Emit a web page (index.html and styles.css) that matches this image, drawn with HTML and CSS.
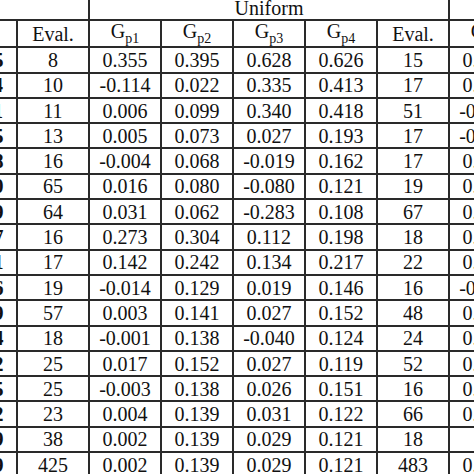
FILE: index.html
```html
<!DOCTYPE html>
<html lang="en">
<head>
    <meta charset="UTF-8">
    <title>Results table</title>
    <link rel="stylesheet" href="styles.css">
</head>
<body>
    <div class="frame">
        <table class="results">
            <colgroup>
                <col><col><col><col><col><col><col><col>
            </colgroup>
            <thead>
                <tr>
                    <th colspan="2"></th>
                    <th colspan="5">Uniform</th>
                    <th></th>
                </tr>
                <tr>
                    <th></th>
                    <th>Eval.</th>
                    <th>G<sub>p1</sub></th>
                    <th>G<sub>p2</sub></th>
                    <th>G<sub>p3</sub></th>
                    <th>G<sub>p4</sub></th>
                    <th>Eval.</th>
                    <th>G<sub>p1</sub></th>
                </tr>
            </thead>
            <tbody>
                <tr><td class="best">0.355</td><td>8</td><td>0.355</td><td>0.395</td><td>0.628</td><td>0.626</td><td>15</td><td>0.349</td></tr>
                <tr><td class="best">0.114</td><td>10</td><td>-0.114</td><td>0.022</td><td>0.335</td><td>0.413</td><td>17</td><td>0.018</td></tr>
                <tr><td class="best">0.011</td><td>11</td><td>0.006</td><td>0.099</td><td>0.340</td><td>0.418</td><td>51</td><td>-0.012</td></tr>
                <tr><td class="best">0.005</td><td>13</td><td>0.005</td><td>0.073</td><td>0.027</td><td>0.193</td><td>17</td><td>-0.007</td></tr>
                <tr><td class="best">0.008</td><td>16</td><td>-0.004</td><td>0.068</td><td>-0.019</td><td>0.162</td><td>17</td><td>0.004</td></tr>
                <tr><td class="best">0.010</td><td>65</td><td>0.016</td><td>0.080</td><td>-0.080</td><td>0.121</td><td>19</td><td>0.012</td></tr>
                <tr><td class="best">0.029</td><td>64</td><td>0.031</td><td>0.062</td><td>-0.283</td><td>0.108</td><td>67</td><td>0.025</td></tr>
                <tr><td class="best">0.277</td><td>16</td><td>0.273</td><td>0.304</td><td>0.112</td><td>0.198</td><td>18</td><td>0.261</td></tr>
                <tr><td class="best">0.141</td><td>17</td><td>0.142</td><td>0.242</td><td>0.134</td><td>0.217</td><td>22</td><td>0.138</td></tr>
                <tr><td class="best">0.016</td><td>19</td><td>-0.014</td><td>0.129</td><td>0.019</td><td>0.146</td><td>16</td><td>-0.010</td></tr>
                <tr><td class="best">0.009</td><td>57</td><td>0.003</td><td>0.141</td><td>0.027</td><td>0.152</td><td>48</td><td>0.002</td></tr>
                <tr><td class="best">0.004</td><td>18</td><td>-0.001</td><td>0.138</td><td>-0.040</td><td>0.124</td><td>24</td><td>0.001</td></tr>
                <tr><td class="best">0.022</td><td>25</td><td>0.017</td><td>0.152</td><td>0.027</td><td>0.119</td><td>52</td><td>0.015</td></tr>
                <tr><td class="best">0.005</td><td>25</td><td>-0.003</td><td>0.138</td><td>0.026</td><td>0.151</td><td>16</td><td>0.003</td></tr>
                <tr><td class="best">0.002</td><td>23</td><td>0.004</td><td>0.139</td><td>0.031</td><td>0.122</td><td>66</td><td>0.004</td></tr>
                <tr><td class="best">0.009</td><td>38</td><td>0.002</td><td>0.139</td><td>0.029</td><td>0.121</td><td>18</td><td></td></tr>
                <tr><td class="best">0.009</td><td>425</td><td>0.002</td><td>0.139</td><td>0.029</td><td>0.121</td><td>483</td><td>0.002</td></tr>
            </tbody>
        </table>
    </div>
</body>
</html>
```

FILE: styles.css
```css
* {
    margin: 0;
    padding: 0;
    box-sizing: border-box;
}

body {
    background-color: #fff;
}

.frame {
    width: 474px;
    height: 474px;
    overflow: hidden;
}

.results {
    border-collapse: collapse;
    table-layout: fixed;
    width: 576px;
    margin: -6px 0 0 -56px;
    font-family: "Liberation Serif", "Times New Roman", serif;
    font-size: 20px;
    color: #111;
}

.results col {
    width: 72px;
}

.results tr {
    height: 25.3px;
}

.results th,
.results td {
    border: 2px solid #2a2a2a;
    text-align: center;
    vertical-align: middle;
    font-weight: normal;
    line-height: 20px;
    padding: 0;
    white-space: nowrap;
}

.results sub {
    font-size: 14px;
    line-height: 1;
    vertical-align: -5px;
}

.results td.best {
    font-weight: bold;
}
```
